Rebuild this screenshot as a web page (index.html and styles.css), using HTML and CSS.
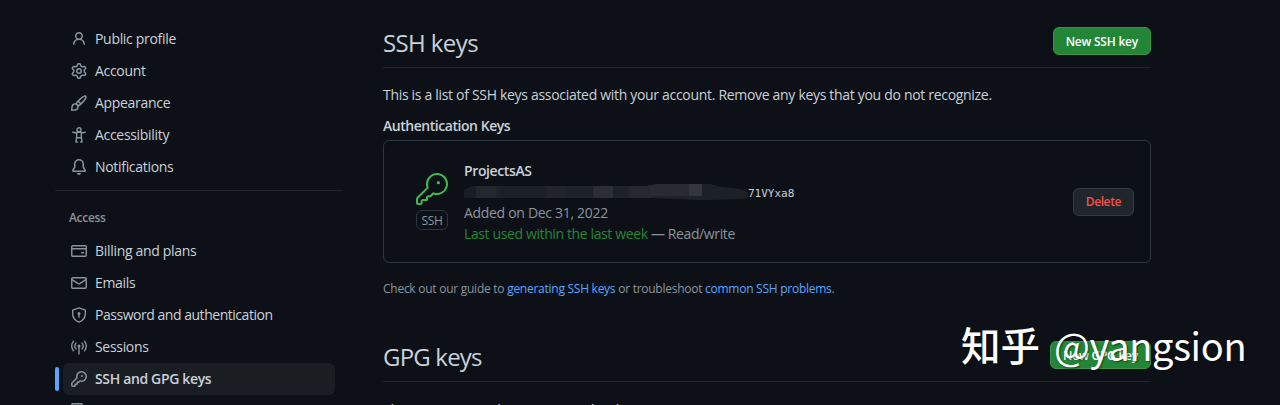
FILE: index.html
```html
<!DOCTYPE html>
<html lang="en">
<head>
<meta charset="utf-8">
<title>SSH and GPG keys</title>
<link rel="stylesheet" href="styles.css">
</head>
<body>
<div class="page">
  <nav class="sidebar">
    <ul class="nav-list">
      <li class="nav-item"><svg class="icon" viewBox="0 0 16 16"><path d="M10.561 8.073a6.005 6.005 0 0 1 3.432 5.142.75.75 0 1 1-1.498.07 4.5 4.5 0 0 0-8.99 0 .75.75 0 0 1-1.498-.07 6.004 6.004 0 0 1 3.431-5.142 3.999 3.999 0 1 1 5.123 0ZM10.5 5a2.5 2.5 0 1 0-5 0 2.5 2.5 0 0 0 5 0Z"/></svg><span>Public profile</span></li>
      <li class="nav-item"><svg class="icon" viewBox="0 0 16 16"><path d="M8 0a8.2 8.2 0 0 1 .701.031C9.444.095 9.99.645 10.16 1.29l.288 1.107c.018.066.079.158.212.224.231.114.454.243.668.386.123.082.233.09.299.071l1.103-.303c.644-.176 1.392.021 1.82.63.27.385.506.792.704 1.218.315.675.111 1.422-.364 1.891l-.814.806c-.049.048-.098.147-.088.294.016.257.016.515 0 .772-.01.147.038.246.088.294l.814.806c.475.469.679 1.216.364 1.891a7.977 7.977 0 0 1-.704 1.217c-.428.61-1.176.807-1.82.63l-1.102-.302c-.067-.019-.177-.011-.3.071a5.909 5.909 0 0 1-.668.386c-.133.066-.194.158-.211.224l-.29 1.106c-.168.646-.715 1.196-1.458 1.26a8.006 8.006 0 0 1-1.402 0c-.743-.064-1.289-.614-1.458-1.26l-.289-1.106c-.018-.066-.079-.158-.212-.224a5.738 5.738 0 0 1-.668-.386c-.123-.082-.233-.09-.299-.071l-1.103.303c-.644.176-1.392-.021-1.82-.63a8.12 8.12 0 0 1-.704-1.218c-.315-.675-.111-1.422.363-1.891l.815-.806c.05-.048.098-.147.088-.294a6.214 6.214 0 0 1 0-.772c.01-.147-.038-.246-.088-.294l-.815-.806C.635 6.045.431 5.298.746 4.623a7.92 7.92 0 0 1 .704-1.217c.428-.61 1.176-.807 1.82-.63l1.102.302c.067.019.177.011.3-.071.214-.143.437-.272.668-.386.133-.066.194-.158.211-.224l.29-1.106C6.009.645 6.556.095 7.299.03 7.53.01 7.764 0 8 0Zm-.571 1.525c-.036.003-.108.036-.137.146l-.289 1.105c-.147.561-.549.967-.998 1.189-.173.086-.34.183-.5.29-.417.278-.97.423-1.529.27l-1.103-.303c-.109-.03-.175.016-.195.045-.22.312-.412.644-.573.99-.014.031-.021.11.059.19l.815.806c.411.406.562.957.53 1.456a4.709 4.709 0 0 0 0 .582c.032.499-.119 1.05-.53 1.456l-.815.806c-.081.08-.073.159-.059.19.162.346.353.677.573.989.02.03.085.076.195.046l1.102-.303c.56-.153 1.113-.008 1.53.27.161.107.328.204.501.29.447.222.85.629.997 1.189l.289 1.105c.029.109.101.143.137.146a6.6 6.6 0 0 0 1.142 0c.036-.003.108-.036.137-.146l.289-1.105c.147-.561.549-.967.998-1.189.173-.086.34-.183.5-.29.417-.278.97-.423 1.529-.27l1.103.303c.109.029.175-.016.195-.045.22-.313.411-.644.573-.99.014-.031.021-.11-.059-.19l-.815-.806c-.411-.406-.562-.957-.53-1.456a4.709 4.709 0 0 0 0-.582c-.032-.499.119-1.05.53-1.456l.815-.806c.081-.08.073-.159.059-.19a6.464 6.464 0 0 0-.573-.989c-.02-.03-.085-.076-.195-.046l-1.102.303c-.56.153-1.113.008-1.53-.27a4.44 4.44 0 0 0-.501-.29c-.447-.222-.85-.629-.997-1.189l-.289-1.105c-.029-.11-.101-.143-.137-.146a6.6 6.6 0 0 0-1.142 0ZM11 8a3 3 0 1 1-6 0 3 3 0 0 1 6 0ZM9.5 8a1.5 1.5 0 1 0-3.001.001A1.5 1.5 0 0 0 9.5 8Z"/></svg><span>Account</span></li>
      <li class="nav-item"><svg class="icon" viewBox="0 0 16 16"><path d="M11.134 1.535c.7-.509 1.416-.942 2.076-1.155.649-.21 1.463-.267 2.069.34.603.601.568 1.411.368 2.07-.202.668-.624 1.39-1.125 2.096-1.011 1.424-2.496 2.987-3.775 4.249-1.098 1.084-2.132 1.839-3.04 2.3a3.744 3.744 0 0 1-1.055 3.217c-.431.431-1.065.691-1.657.861-.614.177-1.294.287-1.914.357A21.151 21.151 0 0 1 .797 16H.743a.75.75 0 0 1-.743-.742v-.055a21.25 21.25 0 0 1 .13-2.284c.067-.647.187-1.287.358-1.914.17-.591.43-1.226.86-1.657a3.746 3.746 0 0 1 3.227-1.054c.466-.893 1.225-1.907 2.314-2.982 1.271-1.255 2.833-2.75 4.245-3.777ZM1.62 13.089c-.051.464-.086.929-.104 1.395.466-.018.932-.053 1.396-.104a10.511 10.511 0 0 0 1.668-.309c.526-.151.856-.325 1.011-.48a2.25 2.25 0 1 0-3.182-3.182c-.155.155-.329.485-.48 1.01a10.515 10.515 0 0 0-.309 1.67Zm10.396-10.34c-1.224.89-2.605 2.189-3.822 3.384l1.718 1.718c1.21-1.205 2.51-2.597 3.387-3.833.47-.662.78-1.227.912-1.662.134-.444.032-.551.009-.575h-.001V1.78c-.014-.014-.113-.113-.548.027-.432.14-.995.462-1.655.942Zm-4.832 7.266-.001.001a9.859 9.859 0 0 0 1.63-1.142L7.155 7.216a9.7 9.7 0 0 0-1.161 1.607c.482.302.889.71 1.19 1.192Z"/></svg><span>Appearance</span></li>
      <li class="nav-item"><svg class="icon line" viewBox="0 0 16 16"><circle cx="8" cy="2.8" r="2"/><path d="M1.8 5.3 5.7 6v3.2L5 15M14.2 5.3l-3.9.7v3.2l.7 5.8M5.6 5.3h4.8M6 10.8h4M5 15h1.3M9.7 15H11"/></svg><span>Accessibility</span></li>
      <li class="nav-item"><svg class="icon" viewBox="0 0 16 16"><path d="M8 16a2 2 0 0 0 1.985-1.75c.017-.137-.097-.25-.235-.25h-3.5c-.138 0-.252.113-.235.25A2 2 0 0 0 8 16ZM3 5a5 5 0 0 1 10 0v2.947c0 .05.015.098.042.139l1.703 2.555A1.519 1.519 0 0 1 13.482 13H2.518a1.516 1.516 0 0 1-1.263-2.36l1.703-2.554A.255.255 0 0 0 3 7.947Zm5-3.5A3.5 3.5 0 0 0 4.5 5v2.947c0 .346-.102.683-.294.97l-1.703 2.556.01.027h10.974l.01-.027-1.703-2.556a1.745 1.745 0 0 1-.294-.97V5A3.5 3.5 0 0 0 8 1.5Z"/></svg><span>Notifications</span></li>
    </ul>
    <h2 class="nav-title">Access</h2>
    <ul class="nav-list">
      <li class="nav-item"><svg class="icon line" viewBox="0 0 16 16"><rect x=".75" y="2.75" width="14.5" height="10.5" rx="1"/><path d="M1 5.75h14M10.7 9.75h1.8"/></svg><span>Billing and plans</span></li>
      <li class="nav-item"><svg class="icon line" viewBox="0 0 16 16"><rect x=".75" y="2.75" width="14.5" height="10.5" rx="1"/><path d="m1 4.7 6.6 4.1q.4.2.8 0L15 4.7"/></svg><span>Emails</span></li>
      <li class="nav-item"><svg class="icon line" viewBox="0 0 16 16"><path d="M8 .9 2.2 2.8q-.5.2-.5.7V7c0 3.7 2 6.4 6.3 8.2 4.3-1.8 6.3-4.5 6.3-8.2V3.5q0-.5-.5-.7Z"/><circle cx="8" cy="6.5" r=".8"/><path d="M8 7v3.2"/></svg><span class="long">Password and authentication</span></li>
      <li class="nav-item"><svg class="icon line" viewBox="0 0 16 16"><path d="M2.5 2.2a8 8 0 0 0 0 9.6M13.5 2.2a8 8 0 0 1 0 9.6M5 4.1a4.5 4.5 0 0 0 0 5.8M11 4.1a4.5 4.5 0 0 1 0 5.8M8 7.5V15"/><circle cx="8" cy="7" r=".9"/></svg><span>Sessions</span></li>
      <li class="nav-item current"><svg class="icon" viewBox="0 0 16 16"><path d="M10.5 0a5.499 5.499 0 1 1-1.288 10.848l-.932.932a.749.749 0 0 1-.53.22H7v.75a.749.749 0 0 1-.22.53l-.5.5a.749.749 0 0 1-.53.22H5v.75a.749.749 0 0 1-.22.53l-.5.5a.749.749 0 0 1-.53.22h-2A1.75 1.75 0 0 1 0 14.25v-2c0-.199.079-.389.22-.53l4.932-4.932A5.5 5.5 0 0 1 10.5 0Zm-4 5.5c-.001.431.069.86.205 1.269a.75.75 0 0 1-.181.768L1.5 12.56v1.69c0 .138.112.25.25.25h1.69l.06-.06v-1.19a.75.75 0 0 1 .75-.75h1.19l.06-.06v-1.19a.75.75 0 0 1 .75-.75h1.19l1.023-1.025a.75.75 0 0 1 .768-.18A4 4 0 1 0 6.5 5.5ZM11 6a1 1 0 1 1 0-2 1 1 0 0 1 0 2Z"/></svg><span>SSH and GPG keys</span></li>
      <li class="nav-item"><svg class="icon line" viewBox="0 0 16 16"><rect x=".75" y=".75" width="10.5" height="14.5" rx="1"/></svg></li>
    </ul>
  </nav>
  <main class="content">
    <header class="section-head"><h1>SSH keys</h1><button class="btn primary">New SSH key</button></header>
    <p class="intro">This is a list of SSH keys associated with your account. Remove any keys that you do not recognize.</p>
    <h3 class="list-title">Authentication Keys</h3>
    <section class="key-card">
      <div class="key-kind">
        <svg class="key-icon" viewBox="0 0 24 24"><path d="M16.75 8.5a1.25 1.25 0 1 0 0-2.5 1.25 1.25 0 0 0 0 2.5Z"/><path d="M15.75 0a8.25 8.25 0 1 1-2.541 16.101l-1.636 1.636a1.744 1.744 0 0 1-1.237.513H9.25a.25.25 0 0 0-.25.25v1.448a.876.876 0 0 1-.256.619l-.214.213a.75.75 0 0 1-.545.22H5.25a.25.25 0 0 0-.25.25v1A1.75 1.75 0 0 1 3.25 24h-1.5A1.75 1.75 0 0 1 0 22.25v-2.836c0-.464.185-.908.513-1.236l7.386-7.388A8.249 8.249 0 0 1 15.75 0ZM9 8.25a6.733 6.733 0 0 0 .463 2.462.75.75 0 0 1-.168.804l-7.722 7.721a.25.25 0 0 0-.073.177v2.836c0 .138.112.25.25.25h1.5a.25.25 0 0 0 .25-.25v-1c0-.966.784-1.75 1.75-1.75H7.5v-1c0-.966.784-1.75 1.75-1.75h1.086a.25.25 0 0 0 .177-.073l1.971-1.972a.75.75 0 0 1 .804-.168A6.75 6.75 0 1 0 9 8.25Z"/></svg>
        <span class="tag">SSH</span>
      </div>
      <div class="key-info">
        <strong class="key-name">ProjectsAS</strong>
        <div class="fingerprint">
          <svg class="redaction" viewBox="0 0 284 16"><defs><clipPath id="smear"><path d="M0 6 8 2H182L194 0H245L257 3 275 5 284 8V14L276 15 234 16 190 14H0Z"/></clipPath></defs><g clip-path="url(#smear)"><rect width="284" height="16" fill="#1e2229"/><rect width="12" height="16" fill="#191d24"/><rect x="12" width="20" height="16" fill="#23282e"/><rect x="36" width="46" height="16" fill="#1b1f26"/><rect x="84" width="18" height="16" fill="#21252b"/><rect x="129" width="20" height="16" fill="#2b2e34"/><rect x="165" width="22" height="16" fill="#25282f"/><rect x="187" width="40" height="12" fill="#292b31"/><rect x="225" width="13" height="12" fill="#34363d"/><rect x="238" width="46" height="16" fill="#1c2027"/></g></svg>
          <code>71VYxa8</code>
        </div>
        <span class="added">Added on Dec 31, 2022</span>
        <span class="usage"><span class="recent">Last used within the last week</span> — Read/write</span>
      </div>
      <button class="btn danger">Delete</button>
    </section>
    <p class="guide">Check out our guide to <a>generating SSH keys</a> or troubleshoot <a>common SSH problems</a>.</p>
    <header class="section-head"><h1 class="gpg">GPG keys</h1><button class="btn primary">New GPG key</button></header>
    <p class="intro last">There are no GPG keys associated with your account.</p>
  </main>
</div>
<div class="watermark"><span class="brand">知乎</span><span class="handle">@yangsion</span></div>
</body>
</html>
```
FILE: styles.css
```css
* { box-sizing: border-box; }
html, body { height: 405px; overflow: hidden; }
body { margin: 0; background: #0d1117; color: #c9d1d9; font: 14px/21px "Open Sans", "Noto Sans", sans-serif; letter-spacing: -.31px; }
h1, h2, h3, p, ul { margin: 0; padding: 0; }
.page { display: flex; gap: 40px; height: 405px; overflow: hidden; padding-left: 55px; }
.sidebar { width: 288px; flex: none; padding-top: 23px; }
.nav-list { list-style: none; padding-left: 8px; }
.nav-item { display: flex; align-items: center; gap: 8px; width: 272px; height: 32px; padding-left: 8px; border-radius: 6px; white-space: nowrap; }
.nav-item span { padding-bottom: 2px; }
.long { letter-spacing: -.47px; }
.icon { width: 16px; height: 16px; flex: none; fill: #8b949e; }
.line { fill: none; stroke: #8b949e; stroke-width: 1.4; stroke-linejoin: round; stroke-linecap: round; }
.current { position: relative; background: #1a1e23; font-weight: 600; letter-spacing: -.35px; }
.current::before { content: ""; position: absolute; left: -8px; top: 4px; width: 4px; height: 24px; border-radius: 3px; background: #58a6ff; }
.nav-title { margin-top: 7px; height: 45px; padding: 18px 14px 0; border-top: 1px solid #21262d; color: #8b949e; font-size: 12px; line-height: 18px; font-weight: 600; }
.content { width: 768px; padding-top: 23px; }
.section-head { display: flex; justify-content: space-between; height: 45px; border-bottom: 1px solid #21262d; }
h1 { font-size: 24px; line-height: 39px; font-weight: 400; letter-spacing: -.6px; }
.gpg { letter-spacing: -.8px; }
.btn { height: 28px; margin: 4px 0 0; padding: 1px 12px 0; border: 1px solid #3b9349; border-radius: 6px; font: 600 12px/20px "Open Sans", sans-serif; letter-spacing: -.22px; }
.primary { background: #238636; color: #fff; }
.danger { margin: 0; color: #f85149; background: #21262d; border-color: #363b42; letter-spacing: -.4px; }
.intro { margin-top: 16px; white-space: nowrap; }
.last { margin-top: 17px; }
.list-title { margin-top: 11px; font-size: 14px; line-height: 20px; font-weight: 600; letter-spacing: -.46px; }
.key-card { display: flex; align-items: center; height: 123px; margin-top: 4px; padding: 0 16px; border: 1px solid #30363d; border-radius: 6px; }
.key-kind { display: flex; flex-direction: column; align-items: center; gap: 5px; width: 32px; margin-left: 16px; }
.key-icon { width: 32px; height: 32px; fill: #3fb950; }
.tag { width: 32px; height: 20px; border: 1px solid #30363d; border-radius: 6px; color: #8b949e; font-size: 12px; line-height: 19px; text-align: center; }
.key-info { display: flex; flex-direction: column; flex: 1; margin-left: 16px; color: #8b949e; }
.key-name { color: #c9d1d9; font-weight: 600; letter-spacing: -.38px; }
.fingerprint { display: flex; align-items: center; height: 21px; padding-top: 2px; color: #c9d1d9; }
.redaction { width: 284px; height: 16px; }
code { padding-top: 3px; font: 11px/16px "DejaVu Sans Mono", monospace; letter-spacing: 0; }
.usage { letter-spacing: -.38px; }
.recent { color: #238636; }
.guide { margin: 17px 0; color: #8b949e; font-size: 12px; line-height: 18px; letter-spacing: -.26px; }
.guide + .section-head { margin-top: 39px; }
.guide a { color: #58a6ff; }
.watermark { position: absolute; left: 961px; top: 318px; display: flex; align-items: baseline; color: #fff; font: 38px/52px "Noto Sans CJK SC", sans-serif; text-shadow: 1px 1px 2px #0008; }
.brand { font-size: 39.5px; font-weight: 500; letter-spacing: 0; }
.handle { margin-left: 14px; letter-spacing: -.35px; }
```
